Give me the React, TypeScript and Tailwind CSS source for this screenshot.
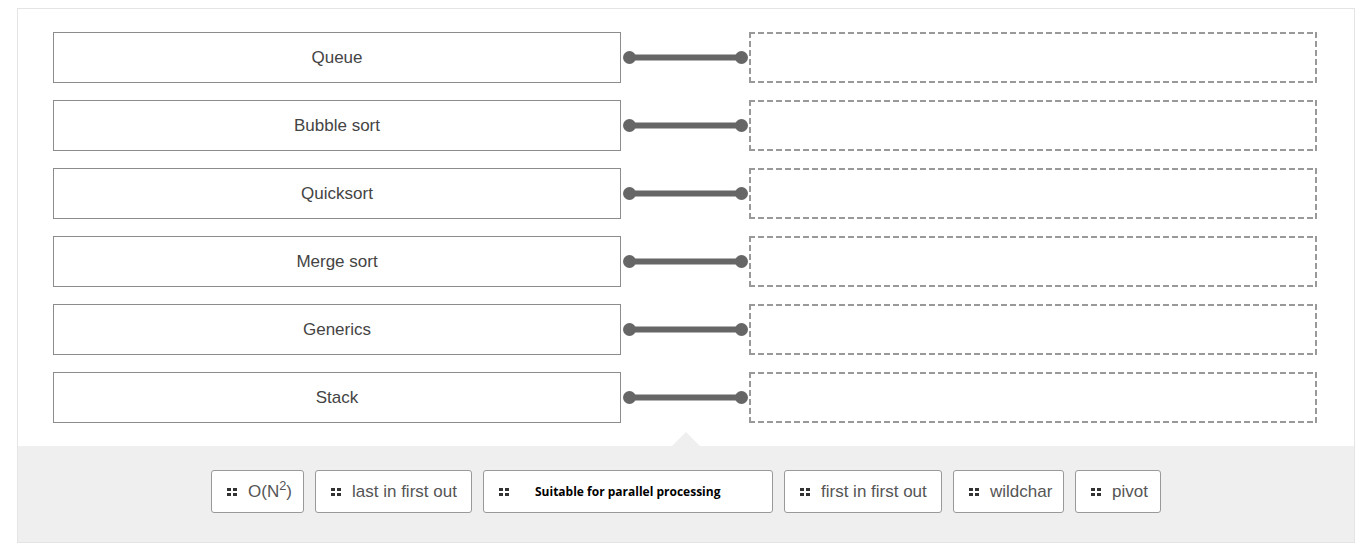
import React from "react";

const rows = ["Queue", "Bubble sort", "Quicksort", "Merge sort", "Generics", "Stack"];

function Grip() {
  return (
    <svg width="10" height="8" viewBox="0 0 10 8" className="shrink-0">
      <rect x="0" y="0" width="4" height="3" fill="#333" />
      <rect x="6" y="0" width="4" height="3" fill="#333" />
      <rect x="0" y="5" width="4" height="3" fill="#333" />
      <rect x="6" y="5" width="4" height="3" fill="#333" />
    </svg>
  );
}

function Connector() {
  return (
    <svg width="128" height="51" viewBox="0 0 128 51" className="shrink-0">
      <line x1="8.5" y1="25.5" x2="120.5" y2="25.5" stroke="#666" strokeWidth="6" />
      <circle cx="8.5" cy="25.5" r="6.5" fill="#666" />
      <circle cx="120.5" cy="25.5" r="6.5" fill="#666" />
    </svg>
  );
}

const chip =
  "h-[43px] bg-white border border-[#999] rounded-[3px] flex items-center pl-[15px] gap-[11px] text-[17px] text-[#555]";

export default function App() {
  return (
    <div className="bg-white w-[1367px] h-[543px] overflow-hidden font-['Liberation_Sans',Arial,sans-serif]">
      <div className="ml-[17px] mt-[8px] w-[1338px] border border-[#e4e4e4] bg-white">
        <div className="pl-[35px] pr-[37px] pt-[23px] pb-[23px] flex flex-col gap-[17px]">
          {rows.map((r) => (
            <div key={r} className="flex items-center h-[51px]">
              <div className="w-[568px] h-[51px] border border-[#8c8c8c] flex items-center justify-center text-[17px] text-[#444]">
                {r}
              </div>
              <Connector />
              <div className="w-[568px] h-[51px] bg-[linear-gradient(90deg,#999_6px,transparent_6px),linear-gradient(90deg,#999_6px,transparent_6px),linear-gradient(180deg,#999_6px,transparent_6px),linear-gradient(180deg,#999_6px,transparent_6px)] [background-size:9px_2px,9px_2px,2px_9px,2px_9px] [background-position:0_0,0_100%,0_0,100%_0] [background-repeat:repeat-x,repeat-x,repeat-y,repeat-y]" />
            </div>
          ))}
        </div>
        <div className="relative bg-[#efefef] h-[96px] pt-[24px] flex justify-center items-start gap-[11px]">
          <div className="absolute left-[654px] top-[-14px] w-0 h-0 border-l-[14px] border-r-[14px] border-b-[14px] border-l-transparent border-r-transparent border-b-[#efefef]" />
          <div className={`w-[93px] ${chip}`}>
            <Grip />
            <span>
              O(N<sup>2</sup>)
            </span>
          </div>
          <div className={`w-[157px] ${chip}`}>
            <Grip />
            <span>last in first out</span>
          </div>
          <div className="w-[290px] h-[43px] bg-white border border-[#999] rounded-[3px] flex items-center pl-[15px]">
            <Grip />
            <span className="ml-[26px] text-[12px] font-bold text-black font-['Open_Sans',sans-serif]">
              Suitable for parallel processing
            </span>
          </div>
          <div className={`w-[158px] ${chip}`}>
            <Grip />
            <span>first in first out</span>
          </div>
          <div className={`w-[111px] ${chip}`}>
            <Grip />
            <span>wildchar</span>
          </div>
          <div className={`w-[86px] ${chip}`}>
            <Grip />
            <span>pivot</span>
          </div>
        </div>
      </div>
    </div>
  );
}
